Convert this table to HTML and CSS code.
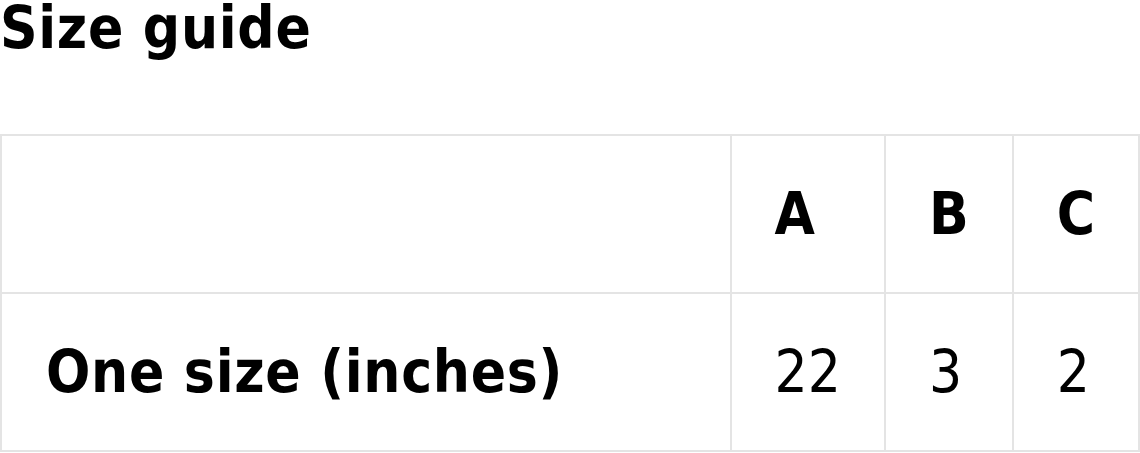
FILE: index.html
```html
<!DOCTYPE html>
<html>
<head>
<meta charset="utf-8">
<link rel="stylesheet" href="styles.css">
</head>
<body>
<h2 class="title">Size guide</h2>
<table class="size-table">
  <thead>
    <tr>
      <th class="label"></th>
      <th class="val">A</th>
      <th class="val">B</th>
      <th class="val">C</th>
    </tr>
  </thead>
  <tbody>
    <tr>
      <th class="label">One size (inches)</th>
      <td class="val">22</td>
      <td class="val">3</td>
      <td class="val">2</td>
    </tr>
  </tbody>
</table>
</body>
</html>
```

FILE: styles.css
```css
html, body {
  margin: 0;
  padding: 0;
  background: #ffffff;
}
body {
  font-family: "DejaVu Sans Condensed", "DejaVu Sans", sans-serif;
  font-stretch: condensed;
  font-size: 58px;
  color: #000000;
  width: 1140px;
}
.title {
  margin: 0 0 78px 0;
  font-size: 58px;
  font-weight: bold;
  line-height: 56px;
  letter-spacing: 0.7px;
}
.size-table {
  width: 100%;
  border-collapse: collapse;
  border: 2px solid #e4e4e4;
}
.size-table th,
.size-table td {
  border: 2px solid #e4e4e4;
  padding: 44px 43px;
  text-align: left;
  line-height: normal;
}
.size-table th {
  font-weight: bold;
  letter-spacing: 0.7px;
}
.size-table thead th {
  letter-spacing: 0;
}
.size-table td {
  font-weight: normal;
}
.size-table .val {
  width: 1px;
  white-space: nowrap;
}
.size-table .label {
  white-space: nowrap;
  padding-left: 44px;
}
```
